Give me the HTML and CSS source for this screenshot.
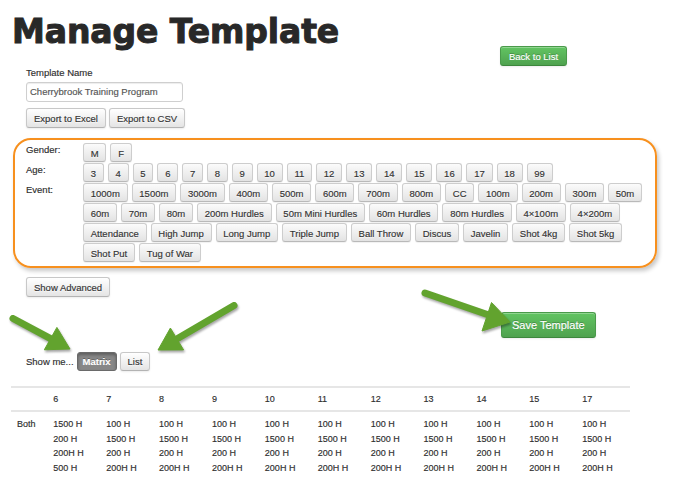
FILE: index.html
```html
<!DOCTYPE html>
<html>
<head>
<meta charset="utf-8">
<title>Manage Template</title>
<link rel="stylesheet" href="styles.css">
</head>
<body>
<div class="page">
  <header class="head">
    <h1 class="title">Manage Template</h1>
    <span class="btn btn-success">Back to List</span>
  </header>

  <div class="form">
    <div class="label">Template Name</div>
    <div class="input">Cherrybrook Training Program</div>
    <div class="btn-row">
      <span class="btn">Export to Excel</span>
      <span class="btn">Export to CSV</span>
    </div>
  </div>

  <div class="filters">
    <div class="frow">
      <span class="flabel">Gender:</span>
      <div class="chips-col">
        <div class="chips"><span class="chip">M</span><span class="chip">F</span></div>
      </div>
    </div>
    <div class="frow">
      <span class="flabel">Age:</span>
      <div class="chips-col">
        <div class="chips">
          <span class="chip">3</span><span class="chip">4</span><span class="chip">5</span><span class="chip">6</span><span class="chip">7</span><span class="chip">8</span><span class="chip">9</span><span class="chip">10</span><span class="chip">11</span><span class="chip">12</span><span class="chip">13</span><span class="chip">14</span><span class="chip">15</span><span class="chip">16</span><span class="chip">17</span><span class="chip">18</span><span class="chip">99</span>
        </div>
      </div>
    </div>
    <div class="frow">
      <span class="flabel">Event:</span>
      <div class="chips-col">
        <div class="chips">
          <span class="chip">1000m</span><span class="chip">1500m</span><span class="chip">3000m</span><span class="chip">400m</span><span class="chip">500m</span><span class="chip">600m</span><span class="chip">700m</span><span class="chip">800m</span><span class="chip">CC</span><span class="chip">100m</span><span class="chip">200m</span><span class="chip">300m</span><span class="chip">50m</span>
        </div>
        <div class="chips">
          <span class="chip">60m</span><span class="chip">70m</span><span class="chip">80m</span><span class="chip">200m Hurdles</span><span class="chip">50m Mini Hurdles</span><span class="chip">60m Hurdles</span><span class="chip">80m Hurdles</span><span class="chip">4×100m</span><span class="chip">4×200m</span>
        </div>
        <div class="chips">
          <span class="chip">Attendance</span><span class="chip">High Jump</span><span class="chip">Long Jump</span><span class="chip">Triple Jump</span><span class="chip">Ball Throw</span><span class="chip">Discus</span><span class="chip">Javelin</span><span class="chip">Shot 4kg</span><span class="chip">Shot 5kg</span>
        </div>
        <div class="chips">
          <span class="chip">Shot Put</span><span class="chip">Tug of War</span>
        </div>
      </div>
    </div>
  </div>

  <div class="after">
    <div class="after-left">
      <span class="btn">Show Advanced</span>
      <div class="showme">
        <span class="showme-text">Show me...</span>
        <span class="btn btn-active">Matrix</span>
        <span class="btn">List</span>
      </div>
    </div>
    <div class="after-right">
      <span class="btn btn-success btn-large">Save Template</span>
    </div>
  </div>

  <table class="matrix">
    <colgroup>
      <col class="c-first">
      <col class="c-age"><col class="c-age"><col class="c-age"><col class="c-age"><col class="c-age"><col class="c-age"><col class="c-age"><col class="c-age"><col class="c-age"><col class="c-age"><col class="c-last">
    </colgroup>
    <thead>
      <tr><th></th><th>6</th><th>7</th><th>8</th><th>9</th><th>10</th><th>11</th><th>12</th><th>13</th><th>14</th><th>15</th><th>17</th></tr>
    </thead>
    <tbody>
      <tr>
        <td>Both</td>
        <td>1500 H<br>200 H<br>200H H<br>500 H</td>
        <td>100 H<br>1500 H<br>200 H<br>200H H</td>
        <td>100 H<br>1500 H<br>200 H<br>200H H</td>
        <td>100 H<br>1500 H<br>200 H<br>200H H</td>
        <td>100 H<br>1500 H<br>200 H<br>200H H</td>
        <td>100 H<br>1500 H<br>200 H<br>200H H</td>
        <td>100 H<br>1500 H<br>200 H<br>200H H</td>
        <td>100 H<br>1500 H<br>200 H<br>200H H</td>
        <td>100 H<br>1500 H<br>200 H<br>200H H</td>
        <td>100 H<br>1500 H<br>200 H<br>200H H</td>
        <td>100 H<br>1500 H<br>200 H<br>200H H</td>
      </tr>
    </tbody>
  </table>

  <svg class="arrows" width="685" height="477" viewBox="0 0 685 477" aria-hidden="true">
    <g class="arrow">
      <line x1="13" y1="318.5" x2="52" y2="339.3"/>
      <polygon points="70,349 44.3,349.8 56.9,327.4"/>
    </g>
    <g class="arrow">
      <line x1="234" y1="305.5" x2="178" y2="338.3"/>
      <polygon points="158,350 170.4,328 183.6,349.9"/>
    </g>
    <g class="arrow">
      <line x1="425" y1="293" x2="488" y2="314.7"/>
      <polygon points="510,322 482,331 491.5,302.5"/>
    </g>
  </svg>
</div>
</body>
</html>
```

FILE: styles.css
```css
html, body {
  margin: 0;
  padding: 0;
  background: #fff;
  overflow: hidden;
}

body {
  font-family: "Liberation Sans", Arial, sans-serif;
  font-size: 9.5px;
  color: #2e2e2e;
  -webkit-text-stroke: 0.15px currentColor;
}

.page {
  position: relative;
  width: 685px;
  height: 477px;
}

/* header */
.head {
  display: flex;
  align-items: flex-start;
  padding: 13px 0 0 12px;
}

.title {
  width: 488px;
  margin: 0;
  font-family: "DejaVu Sans", sans-serif;
  font-weight: bold;
  font-size: 33px;
  line-height: 38px;
  color: #282828;
  -webkit-text-stroke: 1px #282828;
  letter-spacing: -0.1px;
}

.head .btn-success {
  margin-top: 33px;
}

/* buttons */
.btn {
  display: inline-flex;
  align-items: center;
  justify-content: center;
  box-sizing: border-box;
  height: 20px;
  padding: 0 7px;
  font-family: "Liberation Sans", Arial, sans-serif;
  font-size: 9.5px;
  color: #333;
  white-space: nowrap;
  background: linear-gradient(#ffffff, #e4e4e4);
  border: 1px solid #c8c8c8;
  border-bottom-color: #b3b3b3;
  border-radius: 3px;
  box-shadow: inset 0 1px 0 rgba(255,255,255,.3), 0 1px 2px rgba(0,0,0,.08);
  text-shadow: 0 1px 1px rgba(255,255,255,.75);
}

.btn-success {
  color: #fff;
  padding: 0 8px;
  background: linear-gradient(#62c462, #4fa24f);
  border-color: #4a9a4a #4a9a4a #3d873d;
  text-shadow: 0 -1px 0 rgba(0,0,0,.25);
}

.btn-large {
  height: 26px;
  padding: 0 10px;
  font-size: 11px;
}

.btn-active {
  color: #fff;
  font-weight: bold;
  padding: 0 5px;
  background: #878787;
  border-color: #6a6a6a;
  box-shadow: inset 0 2px 3px rgba(0,0,0,.3);
  text-shadow: 0 -1px 0 rgba(0,0,0,.3);
}

/* form */
.form {
  padding-left: 26px;
}

.label {
  line-height: 13px;
}

.input {
  box-sizing: border-box;
  width: 157px;
  height: 20px;
  margin-top: 3px;
  padding: 0 3px;
  line-height: 18px;
  color: #555;
  border: 1px solid #cfcfcf;
  border-radius: 3px;
  box-shadow: inset 0 1px 1px rgba(0,0,0,.075);
}

.btn-row {
  display: flex;
  gap: 3px;
  margin-top: 6px;
}

/* filters box */
.filters {
  box-sizing: border-box;
  width: 644px;
  margin: 10px 0 0 13px;
  padding: 3px 0 3px 11px;
  border: 2px solid #f7901e;
  border-radius: 18px;
  box-shadow: 2px 3px 4px rgba(0,0,0,.22);
}

.frow {
  display: grid;
  grid-template-columns: 57px 1fr;
  align-items: start;
}

.flabel {
  line-height: 13px;
}

.chips-col {
  display: flex;
  flex-direction: column;
}

.chips {
  display: flex;
  gap: 4px;
  margin-bottom: 1px;
}

.chip {
  display: inline-flex;
  align-items: center;
  box-sizing: border-box;
  height: 19px;
  padding: 1px 6.75px 0;
  white-space: nowrap;
  color: #333;
  background: linear-gradient(#fbfbfb, #e3e3e3);
  border: 1px solid #cdcdcd;
  border-bottom-color: #b9b9b9;
  border-radius: 3px;
  box-shadow: 0 1px 1px rgba(0,0,0,.06);
  text-shadow: 0 1px 1px rgba(255,255,255,.75);
}

/* after box */
.after {
  display: grid;
  grid-template-columns: 501px auto;
  margin-top: 9px;
}

.after-left {
  padding-left: 26px;
  display: flex;
  flex-direction: column;
  align-items: flex-start;
}

.showme {
  display: flex;
  align-items: center;
  margin-top: 55px;
}

.showme-text {
  margin-right: 3px;
}

.showme .btn + .btn {
  margin-left: 3px;
}

.showme .btn {
  height: 19px;
}

.after-right {
  padding-top: 35px;
}

/* matrix table */
.matrix {
  margin: 15px 0 0 11px;
  width: 619px;
  table-layout: fixed;
  border-collapse: collapse;
  border-top: 2px solid #e6e6e6;
  font-size: 9px;
}

.c-first { width: 36.3px; }
.c-age { width: 52.9px; }

.matrix th {
  height: 22px;
  padding: 0 6px;
  text-align: left;
  font-weight: normal;
  border-bottom: 2px solid #e6e6e6;
  vertical-align: middle;
}

.matrix td {
  padding: 5px 6px 0;
  line-height: 14.7px;
  vertical-align: top;
  white-space: nowrap;
}

/* annotation arrows */
.arrows {
  position: absolute;
  left: 0;
  top: 0;
  pointer-events: none;
}

.arrow {
  filter: drop-shadow(1px 2px 1.2px rgba(0,0,0,.35));
}

.arrow line {
  stroke: #62a32e;
  stroke-width: 7;
  stroke-linecap: round;
}

.arrow polygon {
  fill: #62a32e;
  stroke: #62a32e;
  stroke-width: 1;
  stroke-linejoin: round;
}
```
